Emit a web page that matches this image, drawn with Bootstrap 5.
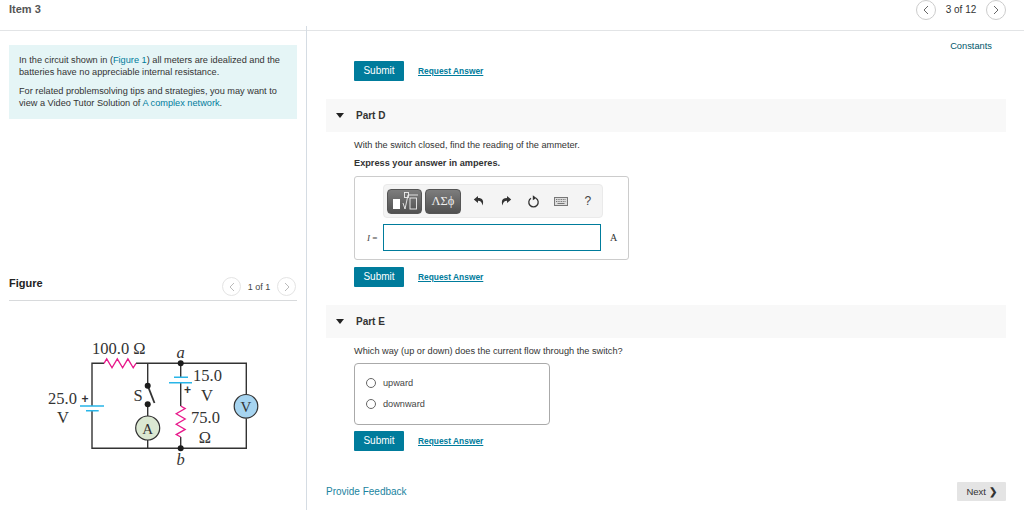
<!DOCTYPE html>
<html lang="en">
<head>
<meta charset="utf-8">
<title>Item 3</title>
<link rel="stylesheet" href="https://cdn.jsdelivr.net/npm/bootstrap@5.3.0/dist/css/bootstrap.min.css">
<style>
html,body{height:510px;overflow:hidden}
body{font-family:"Liberation Sans",Arial,sans-serif;font-size:9.2px;line-height:12px;color:#333;background:#fff}
a{color:#007c9c;text-decoration:none}
.top-bar{height:31px;border-bottom:1px solid #e2e4e6;padding:0 18px 0 9px}
.item-title{font-size:11px;font-weight:700;color:#555;line-height:14px;margin-top:2px}
.circ-btn{width:20px;height:20px;border:1px solid #ccc;border-radius:50%;display:flex;align-items:center;justify-content:center;background:#fff;padding:0;flex:none}
.circ-btn svg{display:block}
.pager-top .pg-count{width:50px;text-align:center;font-size:10px;color:#333}
.side{width:307px;flex:none;border-right:1px solid #d5dce3;padding:18px 9px 0;margin-top:-5px;height:484px}
.callout{background:#e5f5f6;padding:9px 9px 9px 10px;height:74px;width:288px;margin-top:1px}
.callout p{margin:0 0 7px;width:272px}
.fig-head{height:25px;margin-top:157px;border-bottom:1px solid #d8dadc;padding-right:1px}
.fig-title{font-size:11px;font-weight:700;color:#222;line-height:14px}
.pager-fig{margin-top:1px}
.pager-fig .circ-btn{width:19px;height:19px;border-color:#e4e4e4}
.pager-fig .pg-count{width:36px;text-align:center;font-size:9px;color:#444}
.circuit{display:block;width:288px;height:170px;margin-top:19px}
.work{flex:1 1 auto;padding:0 18px 0 19px;height:479px;min-width:0}
.const-row{text-align:right;padding-right:14px;height:12px;margin-top:9px}
.const-row a{color:#00566b;font-size:9.300px}
.act-row{margin-left:28px;gap:14px}
.act-first{margin-top:9px}
.btn-go{--bs-btn-padding-x:0;--bs-btn-padding-y:0;--bs-btn-font-size:10px;--bs-btn-line-height:20px;--bs-btn-border-radius:1px;--bs-btn-bg:#007c9c;--bs-btn-color:#fff;--bs-btn-border-color:#007c9c;width:50px;height:20px;border-width:0;font-weight:400}
.req-link{font-size:8.400px;font-weight:700;text-decoration:underline;color:#007c9c}
.part-bar{height:33px;background:#f8f8f8;padding-left:10px;gap:12px;font-size:10px;font-weight:700;color:#333}
.tri{width:0;height:0;border-left:4px solid transparent;border-right:4px solid transparent;border-top:5px solid #222;flex:none}
.part-d{margin-top:18px}
.part-e{margin-top:18px}
.q-block{margin-left:28px}
.q-text{margin-top:7px}
.q-ask{margin-top:6px}
.ans-box{width:275px;height:84px;border:1px solid #ccc;border-radius:3px;padding:7px 0 0 28px;margin-top:7px;margin-bottom:7px}
.tools{width:220px;height:34px;background:#f4f4f4;border:1px solid #eaeaea;border-radius:4px;padding:3px}
.tool-dk{height:25px;border:1px solid #555;border-radius:4px;background:linear-gradient(#7d7d7d,#515151);display:flex;align-items:center;justify-content:center;color:#eee;font-family:"Liberation Serif",serif;font-size:12.500px;padding:0;flex:none}
.tool-a{width:35px;margin-right:3px}
.tool-b{width:36px;margin-right:4px}
.tool-ic{width:27.300px;height:25px;display:flex;align-items:center;justify-content:center;color:#444;font-size:12px;flex:none}
.ans-row{margin-top:6px;height:27px;margin-left:-16px}
.var-lbl{font-family:"Liberation Serif",serif;font-size:9.200px;width:16px;color:#444}
.ans-input{width:218px;height:27px;border:1.5px solid #007c9c;border-radius:0;padding:0 4px;background:#fff;flex:none}
.unit-lbl{font-family:"Liberation Serif",serif;font-size:10px;margin-left:9px;color:#333}
.choice-box{width:196px;height:62px;border:1px solid #aaa;border-radius:4px;margin-top:6px;margin-bottom:6px;padding:8px 0 0 11px}
.pick{height:21px;min-height:0;margin:0;padding:0;font-size:9.200px;gap:7px;color:#444}
.pick .form-check-input{width:10px;height:10px;margin:0;float:none;border-color:#666}
.page-foot{margin-top:31px;height:20px}
.fb-link{font-size:10px;color:#1a84a0}
.next-btn{--bs-btn-padding-x:0;--bs-btn-padding-y:0;--bs-btn-font-size:9.500px;--bs-btn-line-height:19px;--bs-btn-bg:#e4e4e4;--bs-btn-color:#333;--bs-btn-border-radius:1px;border-width:0;width:49px;height:19px;margin-top:-2px}
</style>
</head>
<body>
<header class="top-bar d-flex justify-content-between align-items-start">
  <div class="item-title">Item 3</div>
  <div class="pager-top d-flex align-items-center">
    <button class="circ-btn" type="button" aria-label="Previous"><svg width="8" height="12" viewBox="0 0 8 12"><path d="M6 2 2 6l4 4" fill="none" stroke="#666"/></svg></button>
    <span class="pg-count">3 of 12</span>
    <button class="circ-btn" type="button" aria-label="Next"><svg width="8" height="12" viewBox="0 0 8 12"><path d="m2 2 4 4-4 4" fill="none" stroke="#666"/></svg></button>
  </div>
</header>
<div class="d-flex">
  <aside class="side">
    <div class="callout">
      <p>In the circuit shown in (<a href="#">Figure 1</a>) all meters are idealized and the batteries have no appreciable internal resistance.</p>
      <p>For related problemsolving tips and strategies, you may want to view a Video Tutor Solution of <a href="#">A complex network</a>.</p>
    </div>
    <div class="fig-head d-flex justify-content-between align-items-start">
      <div class="fig-title">Figure</div>
      <div class="pager-fig d-flex align-items-center">
        <button class="circ-btn" type="button" aria-label="Previous"><svg width="8" height="10" viewBox="0 0 8 10"><path d="M6 1 2 5l4 4" fill="none" stroke="#bbb"/></svg></button>
        <span class="pg-count">1 of 1</span>
        <button class="circ-btn" type="button" aria-label="Next"><svg width="8" height="10" viewBox="0 0 8 10"><path d="m2 1 4 4-4 4" fill="none" stroke="#bbb"/></svg></button>
      </div>
    </div>
    <svg class="circuit" viewBox="9 320 288 170" role="img" aria-label="Circuit diagram">
      <g fill="none" stroke="#333" stroke-width="1.4">
        <path d="M104 363.3H92V406M92 411V448.3H246.3V418.5M246.3 394V363.3H136M147.7 363.3V385.7M147.7 404.3V416M147.7 440V448.3M180.7 363.3V377M180.7 383V406M180.7 437V448.3"/>
        <path d="M147.7 385.7 154.5 403" stroke-width="1.8"/>
      </g>
      <g fill="none" stroke="#e8198b" stroke-width="1.3">
        <path d="M104 363.3l2.7-4.5 5.3 9 5.3-9 5.300 9 5.300-9 5.300 9 2.800-4.500"/>
        <path d="M180.700 406l4.500 2.600-9 5.200 9 5.200-9 5.200 9 5.200-9 5.200 4.500 2.400"/>
      </g>
      <g stroke="#29b5e8" stroke-width="1.6">
        <path d="M80 406h24M86 410.700h12.700M169 382.700h23M174 377.300h14"/>
      </g>
      <g fill="#1c1c1c">
        <circle cx="147.700" cy="385.700" r="3"/>
        <circle cx="147.700" cy="404.300" r="3"/>
        <circle cx="180.700" cy="363.300" r="3"/>
        <circle cx="180.700" cy="448.300" r="3"/>
      </g>
      <circle cx="147.700" cy="428" r="12" fill="#dbe8d2" stroke="#333" stroke-width="1.2"/>
      <circle cx="246" cy="406.300" r="11.800" fill="#a6d4f0" stroke="#333" stroke-width="1.2"/>
      <g font-family="Liberation Serif, serif" font-size="16.500" fill="#333">
        <text x="92" y="354">100.0 Ω</text>
        <text x="193" y="381">15.0</text>
        <text x="207" y="401" text-anchor="middle">V</text>
        <text x="191" y="423">75.0</text>
        <text x="205" y="443" text-anchor="middle">Ω</text>
        <text x="48" y="404">25.0</text>
        <text x="63" y="423" text-anchor="middle">V</text>
        <text x="138" y="401" text-anchor="middle">S</text>
        <text x="180.500" y="358" text-anchor="middle" font-style="italic">a</text>
        <text x="180.500" y="465" text-anchor="middle" font-style="italic">b</text>
        <text x="147.700" y="433.500" text-anchor="middle" font-size="15">A</text>
        <text x="246" y="411.500" text-anchor="middle" font-size="15">V</text>
      </g>
      <g font-family="Liberation Sans, sans-serif" font-weight="700" font-size="12" fill="#333" text-anchor="middle">
        <text x="85" y="403">+</text>
        <text x="187.500" y="394">+</text>
      </g>
    </svg>
  </aside>
  <main class="work">
    <div class="const-row"><a href="#">Constants</a></div>
    <div class="act-row act-first d-flex align-items-center">
      <button class="btn btn-go" type="button">Submit</button>
      <a href="#" class="req-link">Request Answer</a>
    </div>
    <section class="part-bar part-d d-flex align-items-center"><span class="tri"></span><span>Part D</span></section>
    <div class="q-block">
      <div class="q-text">With the switch closed, find the reading of the ammeter.</div>
      <div class="q-ask fw-bold">Express your answer in amperes.</div>
      <div class="ans-box">
        <div class="tools d-flex align-items-center">
          <div class="tool-dk tool-a"><svg width="30" height="21" viewBox="0 0 30 21"><rect x="3" y="8" width="7" height="10" fill="#fff"/><g fill="none" stroke="#eee" stroke-width=".9"><rect x="14.500" y="1.500" width="4" height="5"/><path d="M13 12l2 6 3-14h10"/><rect x="20" y="7" width="6.500" height="11"/></g></svg></div>
          <div class="tool-dk tool-b">ΛΣϕ</div>
          <div class="tool-ic"><svg width="12" height="12" viewBox="0 0 12 12"><path d="M5 1 .8 4.500 5 8V5.800c2.500 0 3.800 1.200 4.500 4.700C11.200 5.500 9.500 3 5 3z" fill="#333"/></svg></div>
          <div class="tool-ic"><svg width="12" height="12" viewBox="0 0 12 12"><path d="m7 1 4.200 3.500L7 8V5.800c-2.500 0-3.800 1.200-4.500 4.700C.8 5.500 2.500 3 7 3z" fill="#333"/></svg></div>
          <div class="tool-ic"><svg width="13" height="13" viewBox="0 0 13 13"><path d="M4 3.200a4.700 4.700 0 1 0 5 0" fill="none" stroke="#333" stroke-width="1.300"/><path d="M5.800 .3v5L9.500 3z" fill="#333"/></svg></div>
          <div class="tool-ic"><svg width="14" height="9" viewBox="0 0 14 9"><rect x=".5" y=".5" width="13" height="8" fill="#ddd" stroke="#777"/><path d="M2 2.500h10M2 4.500h10" stroke="#777" stroke-dasharray="1 .7"/><path d="M3.500 6.500h7" stroke="#777"/></svg></div>
          <div class="tool-ic">?</div>
        </div>
        <div class="ans-row d-flex align-items-center">
          <span class="var-lbl"><i>I</i> =</span>
          <input class="ans-input form-control" type="text" aria-label="Answer">
          <span class="unit-lbl">A</span>
        </div>
      </div>
    </div>
    <div class="act-row d-flex align-items-center">
      <button class="btn btn-go" type="button">Submit</button>
      <a href="#" class="req-link">Request Answer</a>
    </div>
    <section class="part-bar part-e d-flex align-items-center"><span class="tri"></span><span>Part E</span></section>
    <div class="q-block">
      <div class="q-text">Which way (up or down) does the current flow through the switch?</div>
      <div class="choice-box">
        <label class="pick form-check d-flex align-items-center"><input class="form-check-input" type="radio" name="way"><span>upward</span></label>
        <label class="pick form-check d-flex align-items-center"><input class="form-check-input" type="radio" name="way"><span>downward</span></label>
      </div>
    </div>
    <div class="act-row d-flex align-items-center">
      <button class="btn btn-go" type="button">Submit</button>
      <a href="#" class="req-link">Request Answer</a>
    </div>
    <div class="page-foot d-flex justify-content-between align-items-center">
      <a href="#" class="fb-link">Provide Feedback</a>
      <button class="btn next-btn" type="button">Next <b>❯</b></button>
    </div>
  </main>
</div>
</body>
</html>
